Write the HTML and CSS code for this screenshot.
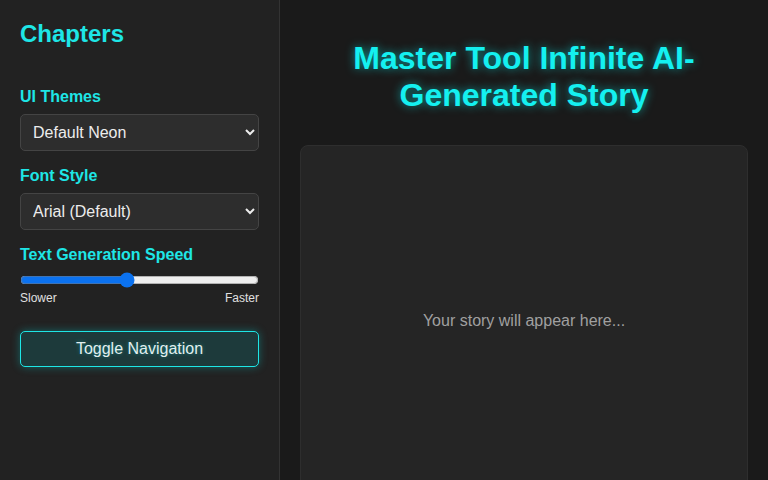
FILE: index.html
```html
<!DOCTYPE html>
<html lang="en">
<head>
<meta charset="utf-8">
<title>Master Tool Infinite AI-Generated Story</title>
<link rel="stylesheet" href="styles.css">
</head>
<body>
<div class="app">
  <aside class="sidebar">
    <h2 class="sidebar-title">Chapters</h2>

    <div class="control-group">
      <label class="control-label" for="theme">UI Themes</label>
      <select id="theme" class="control-select">
        <option>Default Neon</option>
        <option>Dark Matter</option>
        <option>Retro Terminal</option>
      </select>
    </div>

    <div class="control-group">
      <label class="control-label" for="font">Font Style</label>
      <select id="font" class="control-select">
        <option>Arial (Default)</option>
        <option>Georgia</option>
        <option>Courier New</option>
      </select>
    </div>

    <div class="control-group">
      <label class="control-label" for="speed">Text Generation Speed</label>
      <input id="speed" class="speed-range" type="range" min="1" max="10" value="5">
      <div class="range-labels">
        <span>Slower</span>
        <span>Faster</span>
      </div>
    </div>

    <button class="nav-toggle" type="button">Toggle Navigation</button>
  </aside>

  <main class="main">
    <h1 class="title">Master Tool Infinite AI-Generated Story</h1>
    <section class="story">
      <p class="story-placeholder">Your story will appear here...</p>
    </section>
  </main>
</div>
</body>
</html>
```

FILE: styles.css
```css
* {
  box-sizing: border-box;
}

html, body {
  margin: 0;
  height: 100%;
}

body {
  background: #1a1a1a;
  color: #e0e0e0;
  font-family: "Liberation Sans", Arial, sans-serif;
  overflow: hidden;
}

.app {
  display: flex;
  height: 100vh;
}

/* Left settings panel */
.sidebar {
  width: 280px;
  flex: 0 0 280px;
  background: #222222;
  border-right: 1px solid #333333;
  padding: 20px;
}

.sidebar-title {
  margin: 0 0 40px;
  font-size: 24px;
  font-weight: bold;
  color: #1ee6e6;
}

.control-group {
  margin-bottom: 16px;
}

.control-label {
  display: block;
  margin-bottom: 8px;
  font-size: 16px;
  font-weight: bold;
  color: #1ee6e6;
}

.control-select {
  display: block;
  width: 100%;
  height: 37px;
  padding: 8px;
  font-family: inherit;
  font-size: 16px;
  color: #ececec;
  background: #2d2d2d;
  border: 1px solid #444444;
  border-radius: 5px;
}

.speed-range {
  display: block;
  width: 100%;
  margin: 0;
  accent-color: #0b72f0;
}

.range-labels {
  display: flex;
  justify-content: space-between;
  margin-top: 3px;
  font-size: 12px;
  color: #e0e0e0;
}

.nav-toggle {
  display: block;
  width: 100%;
  height: 36px;
  margin-top: 26px;
  font-family: inherit;
  font-size: 16px;
  color: #e2eeee;
  background: #1d3a3b;
  border: 1px solid #1ee6e6;
  border-radius: 5px;
  box-shadow: 0 0 8px rgba(0, 230, 230, 0.35);
  text-shadow: 0 0 4px rgba(0, 255, 255, 0.35);
  cursor: pointer;
}

/* Story area */
.main {
  flex: 1;
  padding: 20px;
  min-width: 0;
}

.title {
  margin: 20px 0 31px;
  font-size: 32px;
  font-weight: bold;
  line-height: 1.15;
  text-align: center;
  color: #14f0f0;
  text-shadow: 0 0 10px rgba(0, 255, 255, 0.55);
}

.story {
  display: flex;
  align-items: center;
  justify-content: center;
  min-height: 353px;
  background: #252525;
  border: 1px solid #2e2e2e;
  border-radius: 8px;
}

.story-placeholder {
  margin: 0;
  font-size: 16px;
  color: #a0a0a0;
}
```
